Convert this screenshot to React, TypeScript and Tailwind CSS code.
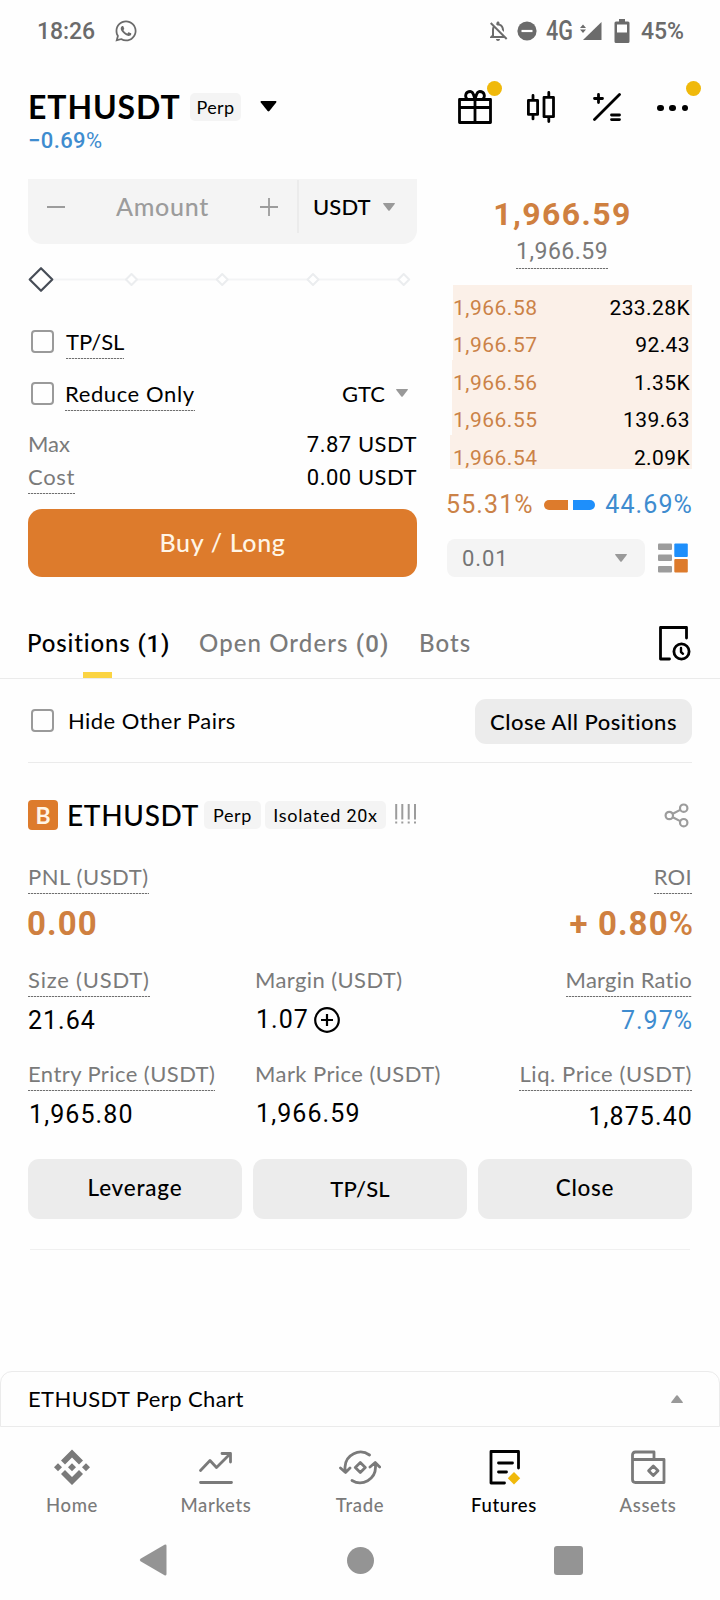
import type { ReactNode } from "react";
import { FaWhatsapp } from "react-icons/fa";
import { MdOutlineNotificationsOff } from "react-icons/md";

const NUM = "font-['Roboto','Liberation_Sans',sans-serif]";

function Num({ children, className = "" }: { children: ReactNode; className?: string }) {
  return <span className={`${NUM} ${className}`}>{children}</span>;
}

/* Label with the dashed rule that marks an explainable term */
function Hint({ children, className = "" }: { children: ReactNode; className?: string }) {
  return (
    <div className={`flex h-[31px] w-fit flex-col whitespace-nowrap ${className}`}>
      <span className="leading-7">{children}</span>
      <span className="mt-0.5 h-px w-full shrink-0 bg-[repeating-linear-gradient(90deg,#6f6f6f_0_2px,#dcdcdc_2px_3px)]" />
    </div>
  );
}

function Checkbox({ className = "" }: { className?: string }) {
  return <span className={`size-[23px] shrink-0 rounded-[4px] border-2 border-[#9a9a9a] ${className}`} />;
}

function Caret({ className = "" }: { className?: string }) {
  return (
    <svg viewBox="0 0 12 8" className={`h-2 w-3 shrink-0 fill-[#999] ${className}`}>
      <path d="M.6 0h10.800q.9.200.3 1L6.700 7.400q-.7.700-1.400 0L.3 1Q-.3.200.6 0z" />
    </svg>
  );
}

function StatusBar() {
  return (
    <div className={`flex h-[62px] items-center pt-[3px] text-[23px] font-medium text-[#6b6b6b] ${NUM}`}>
      <span className="ml-[37px] w-[78px] tracking-[-0.1px]">18:26</span>
      <FaWhatsapp className="-ml-px -mt-1 size-6" />
      <div className="ml-auto mr-[37px] flex items-center">
        <MdOutlineNotificationsOff className="-mt-[3px] mr-[7px] size-6" />
        <svg viewBox="0 0 20 20" className="-mt-1 mr-[9px] size-5">
          <circle cx="10" cy="10" r="9.600" fill="#6b6b6b" />
          <path d="M4.500 10h11" stroke="#fff" strokeWidth="2.200" />
        </svg>
        <span className="-mt-0.5 w-7 origin-left scale-x-[0.8] text-[27px] leading-none">4G</span>
        <svg viewBox="0 0 22 20" className="-mt-[3px] ml-[6px] h-5 w-[22px]" fill="#6b6b6b">
          <path d="M21.500 1v18H3z" />
          <path d="M0 7 3 3.500 6 7zM0 8.500 3 12l3-3.500z" />
        </svg>
        <svg viewBox="0 0 16 24" className="-mt-[3px] ml-3 h-6 w-4">
          <path d="M5 0h6v2.500h3q1.500 0 1.500 1.500v18.500q0 1.500-1.500 1.500H2Q.5 24 .5 22.500V4Q.5 2.500 2 2.500h3z" fill="#6b6b6b" />
          <path d="M3 5.500h10v8H3z" fill="#fff" />
        </svg>
        <span className="ml-[11px] w-[42px] tracking-[-0.1px]">45%</span>
      </div>
    </div>
  );
}

function Dot({ className }: { className: string }) {
  return <span className={`absolute -top-[9px] size-[15px] rounded-full bg-[#f0b90b] ${className}`} />;
}

function Header() {
  return (
    <header className="h-[117px] px-7 pt-[25px]">
      <div className="flex h-10 items-center">
        <h1 className="w-[152px] text-[32px] font-bold leading-10 tracking-[0.9px]">ETHUSDT</h1>
        <span className="ml-[10px] flex h-7 w-[51px] items-center justify-center rounded-[5px] bg-[#f4f4f4] pt-px text-[18px] tracking-[0.4px]">Perp</span>
        <svg viewBox="0 0 17 11" className="-mt-px ml-[19px] h-[11px] w-[17px]">
          <path d="M1.200 0h14.600q1.200.3.400 1.400L9.400 10q-.9.900-1.800 0L.8 1.400Q0 .3 1.200 0z" />
        </svg>
        <div className="ml-auto mr-1 flex items-center">
          <span className="relative mr-[35px]">
            <svg viewBox="0 0 34 34" className="block size-[34px]" fill="none" stroke="#000" strokeWidth="2.800" strokeLinejoin="round">
              <path d="M1.500 9.500h31v23h-31zM1.500 17.500h31M17 9.500v23" />
              <path d="M17 9c-1-1-1-7.500-4.800-7.500C7.500 1.500 6.500 6.500 9 9M17 9c1-1 1-7.500 4.800-7.500C26.500 1.500 27.500 6.500 25 9" />
            </svg>
            <Dot className="-right-[10px]" />
          </span>
          <svg viewBox="0 0 28 32" className="mr-[38px] h-8 w-7" fill="none" stroke="#000" strokeWidth="2.800" strokeLinecap="round" strokeLinejoin="round">
            <path d="M1.400 9.400h9.200v14H1.400zM17 6.400h9.500v19.300H17zM6 4.500v4.900M6 23.400v4.500M21.800 1.500v4.900M21.800 25.700v4.900" />
          </svg>
          <svg viewBox="0 0 28 28" className="mr-[36px] size-7" fill="none" stroke="#000" strokeWidth="2.800" strokeLinecap="round">
            <path d="M1.500 26.500 26.500 1.500M1.500 5.500h8M5.500 1.500v8M18.500 22h8M18.500 26.600h8" />
          </svg>
          <span className="relative flex h-[34px] w-[31px] items-center justify-between">
            <i className="mt-0.5 size-[6.5px] rounded-full bg-black" />
            <i className="mt-0.5 size-[6.5px] rounded-full bg-black" />
            <i className="mt-0.5 size-[6.5px] rounded-full bg-black" />
            <Dot className="-right-[13px]" />
          </span>
        </div>
      </div>
      <Num className="block pt-px text-[22px] font-medium leading-[26px] tracking-[0.4px] text-[#3e8ccf]">−0.69<span className="font-normal">%</span></Num>
    </header>
  );
}

function OrderForm() {
  return (
    <div className="w-[389px]">
      <div className="flex h-[65px] items-start rounded-b-[14px] bg-[#f4f4f4]">
        <div className="flex h-14 flex-1 items-center text-[#9c9c9c]">
          <span className="ml-[19px] h-[2px] w-[18px] bg-[#9c9c9c]" />
          <span className="flex-1 text-center text-[25px] font-medium tracking-[0.75px]">Amount</span>
          <svg viewBox="0 0 18 18" className="mr-[19px] size-[18px]" stroke="#9c9c9c" strokeWidth="1.800">
            <path d="M0 9h18M9 0v18" />
          </svg>
        </div>
        <span className="mt-px h-[53px] w-0.5 bg-[#ebebeb]" />
        <div className="flex h-14 w-[118px] items-center pl-[14px] text-[22px] font-medium tracking-[0.1px]">
          <span className="-mt-0.5">USDT</span>
          <Caret className="ml-auto mr-[22px]" />
        </div>
      </div>
      <svg viewBox="0 0 389 27" className="mt-[22px] block h-[27px] w-[389px]" fill="#fff">
        <path d="M13 13.500h363" stroke="#f3f4f5" strokeWidth="2" />
        {[103.5, 194.2, 285, 375.7].map((x) => (
          <path key={x} d={`M${x - 5.5} 13.500l5.500-5.500 5.500 5.500-5.500 5.500z`} stroke="#ebedef" strokeWidth="2" strokeLinejoin="round" />
        ))}
        <path d="M1.700 13.500 13 2.200l11.300 11.300L13 24.800z" stroke="#474d57" strokeWidth="2.200" strokeLinejoin="round" />
      </svg>
      <div className="mt-[35px] flex h-[31px] items-start pl-[3px] text-[22px]">
        <Checkbox className="mt-0.5" />
        <Hint className="ml-3">TP/SL</Hint>
      </div>
      <div className="mt-[21px] flex h-[31px] items-start pl-[3px] text-[22px]">
        <Checkbox className="mt-0.5" />
        <Hint className="ml-[11px] tracking-[0.6px]">Reduce Only</Hint>
        <span className="ml-auto leading-7">GTC</span>
        <Caret className="ml-[11px] mr-[9px] mt-[9px]" />
      </div>
      <div className="mt-[19px] flex justify-between text-[22px] leading-7">
        <span className="text-[#7a7a7a]">Max</span>
        <span className="tracking-[0.5px]"><Num>7.87</Num> USDT</span>
      </div>
      <div className="mt-1 flex h-[31px] justify-between text-[22px] leading-7">
        <Hint className="tracking-[0.7px] text-[#7a7a7a]">Cost</Hint>
        <span className="tracking-[0.5px]"><Num>0.00</Num> USDT</span>
      </div>
      <button className="mt-[15px] block h-[68px] w-full rounded-[14px] bg-[#dd7b2c] text-[25px] font-medium tracking-[0.65px] text-[#fff5e6]">
        Buy / Long
      </button>
    </div>
  );
}

const asks = [
  { price: "1,966.58", amount: "233.28K", pad: "ml-1.5" },
  { price: "1,966.57", amount: "92.43", pad: "ml-1.5" },
  { price: "1,966.56", amount: "1.35K", pad: "ml-[5px] pl-px" },
  { price: "1,966.55", amount: "139.63", pad: "ml-[5px] pl-px" },
  { price: "1,966.54", amount: "2.09K", pad: "ml-[3px] pl-[3px]" },
];

function OrderBook() {
  return (
    <div className={`flex w-[245px] flex-col ${NUM}`}>
      <span className="mt-[15px] pr-[14px] text-center text-[32px] font-bold leading-10 tracking-[1.4px] text-[#cf8040]">1,966.59</span>
      <Hint className="ml-[69px] mt-[3px] pt-px text-[23px] tracking-[0.5px] text-[#7a7a7a]">1,966.59</Hint>
      <div className="mt-[17px] h-[184px] overflow-hidden">
        {asks.map((r) => (
          <div key={r.price} className={`flex h-[37.5px] justify-between bg-[#fbf0e8] pr-0.5 pt-[7.5px] text-[21px] leading-[30px] ${r.pad}`}>
            <span className="tracking-[0.5px] text-[#cb8247]">{r.price}</span>
            <span className="tracking-[0.4px]">{r.amount}</span>
          </div>
        ))}
      </div>
      <div className="mt-[15px] flex h-10 items-center pt-px text-[25px] tracking-[1.1px]">
        <span className="-ml-px w-[98px] text-[#cb8247]">55.31%</span>
        <span className="h-[10px] w-6 rounded-l-full bg-[#dd7b2c]" />
        <span className="ml-[5px] h-[10px] w-[22px] rounded-r-full bg-[#1e8ffb]" />
        <span className="-mr-px ml-auto text-[#3e8ccf]">44.69%</span>
      </div>
      <div className="mt-[15px] flex h-[38px] items-center">
        <div className="flex h-full w-[198px] items-center justify-between rounded-[8px] bg-[#f4f4f4] pl-[15px] pr-[18px] text-[22px] tracking-[0.9px] text-[#757575]">
          0.01
          <Caret />
        </div>
        <svg viewBox="0 0 30 30" className="ml-[13px] size-[30px]">
          <g fill="#9c9c9c">
            <rect x="0" y=".5" width="14" height="6.500" rx="1" />
            <rect x="0" y="11.500" width="14" height="6.500" rx="1" />
            <rect x="0" y="23" width="14" height="6.500" rx="1" />
          </g>
          <rect x="16.300" y=".5" width="13.500" height="13.500" rx="1" fill="#1e8ffb" />
          <rect x="16.300" y="16" width="13.500" height="13.500" rx="1" fill="#dd7b2c" />
        </svg>
      </div>
    </div>
  );
}

function Tabs() {
  return (
    <div className="mt-8 flex h-[70px] items-stretch border-b border-[#ebebeb] px-7 text-[24px] font-medium leading-[67px] text-[#7a7a7a]">
      <span className="relative -ml-px w-[172px] whitespace-nowrap tracking-[0.85px] text-black">
        Positions <Num>(1)</Num>
        <i className="absolute bottom-0 left-[56px] h-[6px] w-[29px] bg-[#fbd443]" />
      </span>
      <span className="w-[220px] whitespace-nowrap tracking-[1.1px]">Open Orders <Num>(0)</Num></span>
      <span className="tracking-[1.1px]">Bots</span>
      <svg viewBox="0 0 32 36" className="ml-auto mr-px mt-4 h-9 w-8" fill="none" stroke="#000" strokeWidth="2.800" strokeLinecap="round" strokeLinejoin="round">
        <path d="M10.500 34H1.500V2.500h26v10.500" />
        <circle cx="22.500" cy="26.500" r="7.600" />
        <path d="M22 23v4l2 1.800" strokeWidth="2.400" />
      </svg>
    </div>
  );
}

function Badge({ children, className = "" }: { children: ReactNode; className?: string }) {
  return (
    <span className={`flex h-7 items-center justify-center whitespace-nowrap rounded-[5px] bg-[#f4f4f4] text-[18px] ${className}`}>{children}</span>
  );
}

function Action({ children, className }: { children: ReactNode; className: string }) {
  return <button className={`h-[60px] flex-1 rounded-[11px] bg-[#ececec] pb-0.5 font-medium ${className}`}>{children}</button>;
}

function Position() {
  return (
    <section className="px-7">
      <div className="mt-[37px] flex h-[30px] items-center">
        <span className="flex size-[30px] items-center justify-center rounded-[4px] bg-[#dd7b2c] text-[23px] font-bold leading-none text-[#fff5e6]">B</span>
        <h2 className="ml-[9px] w-[137px] text-[28px] font-medium leading-[30px] tracking-[0.7px]">ETHUSDT</h2>
        <Badge className="w-[57px] tracking-[0.6px]">Perp</Badge>
        <Badge className="ml-1 w-[121px] tracking-[0.75px]"><span>Isolated <Num>20</Num>x</span></Badge>
        <svg viewBox="0 0 22 20" className="-mt-0.5 ml-[9px] h-5 w-[22px]" stroke="#9c9c9c" strokeWidth="2">
          <path d="M1.200 0v15.500M7.300 0v15.500M13.700 0v15.500M20 0v15.500M1.200 17.500v2M7.300 17.500v2M13.700 17.500v2M20 17.500v2" />
        </svg>
        <svg viewBox="0 0 25 25" className="ml-auto mr-[3px] size-[25px]" fill="none" stroke="#9c9c9c" strokeWidth="2.200">
          <circle cx="5.300" cy="12.500" r="3.700" />
          <circle cx="19.700" cy="5.200" r="3.700" />
          <circle cx="19.700" cy="19.700" r="3.700" />
          <path d="M8.800 10.800l7.400-3.900M8.800 14.200l7.400 3.900" />
        </svg>
      </div>
      <div className="mt-[33px] flex justify-between text-[22px] text-[#7a7a7a]">
        <Hint className="tracking-[0.55px]">PNL (USDT)</Hint>
        <Hint className="tracking-[0.3px]">ROI</Hint>
      </div>
      <div className={`mt-3 flex h-9 justify-between text-[33px] font-bold leading-[35px] tracking-[1.1px] text-[#cf8040] ${NUM}`}>
        <span className="-ml-px">0.00</span>
        <span className="-mr-px">+ 0.80<span className="font-medium tracking-normal">%</span></span>
      </div>
      <div className="mt-6 grid grid-cols-[227px_1fr_auto] text-[22px] text-[#7a7a7a]">
        <Hint className="tracking-[0.8px]">Size (USDT)</Hint>
        <span className="leading-7 tracking-[0.4px]">Margin (USDT)</span>
        <Hint className="tracking-[0.25px]">Margin Ratio</Hint>
      </div>
      <div className={`mt-[10px] grid h-7 grid-cols-[228px_1fr_auto] text-[25px] leading-7 tracking-[1px] ${NUM}`}>
        <span>21.64</span>
        <span className="-mt-px flex h-7 items-center">
          1.07
          <svg viewBox="0 0 26 26" className="ml-[5px] size-[26px]" fill="none" stroke="#000" strokeWidth="2.200">
            <circle cx="13" cy="13" r="11.800" />
            <path d="M7 13h12M13 7v12" />
          </svg>
        </span>
        <span className="-mr-px text-[#3e8ccf]">7.97%</span>
      </div>
      <div className="mt-[25px] grid grid-cols-[227px_1fr_auto] text-[22px] text-[#7a7a7a]">
        <Hint className="tracking-[0.43px]">Entry Price (USDT)</Hint>
        <span className="leading-7 tracking-[0.43px]">Mark Price (USDT)</span>
        <Hint className="tracking-[0.6px]">Liq. Price (USDT)</Hint>
      </div>
      <div className={`mt-[10px] grid h-7 grid-cols-[227px_1fr_auto] text-[25px] leading-7 tracking-[1.1px] ${NUM}`}>
        <span className="pl-px">1,965.80</span>
        <span className="-mt-px pl-px">1,966.59</span>
        <span className="-mr-px mt-0.5">1,875.40</span>
      </div>
      <div className="mt-[30px] flex gap-[11px]">
        <Action className="text-[22.5px] tracking-[0.8px]">Leverage</Action>
        <Action className="text-[22px] tracking-[0.2px]">TP/SL</Action>
        <Action className="text-[22.5px] tracking-[0.7px]">Close</Action>
      </div>
      <div className="mx-0.5 mt-[30px] h-px bg-[#f0f0f0]" />
    </section>
  );
}

function NavItem({ label, active, children }: { label: string; active?: boolean; children: ReactNode }) {
  return (
    <div className={`flex w-36 flex-col items-center ${active ? "text-black" : "text-[#7a7a7a]"}`}>
      <svg viewBox="0 0 42 36" className="h-9 w-[42px]" fill="none" stroke="currentColor" strokeWidth="2.800" strokeLinecap="round" strokeLinejoin="round">
        {children}
      </svg>
      <span className="mt-[10px] text-[18.5px] font-medium leading-5 tracking-[0.65px]">{label}</span>
    </div>
  );
}

function BottomNav() {
  return (
    <nav className="flex h-[93px] pt-[22px]">
      <NavItem label="Home">
        <g fill="currentColor" stroke="none">
          <path d="M21 .5 32 11.500l-4 4-7-7-7 7-4-4zM21 36 32 25l-4-4-7 7-7-7-4 4zM21 14.300l4 4-4 4-4-4zM7 14.300l4 4-4 4-4-4zM35 14.300l4 4-4 4-4-4z" />
        </g>
      </NavItem>
      <NavItem label="Markets">
        <path d="M5.500 21.500 15 11.500l6.500 7L35 5M27 4.500h8.500v8.500M5.500 33.500h31" />
      </NavItem>
      <NavItem label="Trade">
        <path d="M6 23V18A15.500 15.500 0 0 1 30.500 6M1.500 19l5 4.500 4.500-4.500M36.500 15V18A15.500 15.500 0 0 1 13 31.500M31 18l5.200-4.500 4.500 4.500M21.300 13.500l5 5-5 5-5-5z" />
      </NavItem>
      <NavItem label="Futures" active>
        <path d="M21.500 34H8V2.500h27.500V19M15.500 14h14M15.500 23h8" />
        <path d="M31 23l6.200 6.200L31 35.400l-6.200-6.200z" fill="#f0b90b" stroke="none" />
      </NavItem>
      <NavItem label="Assets">
        <path d="M5.500 11V6q0-3 3-3H27v7.500M5.500 10.500H37V33.500H8.500q-3 0-3-3zM5.500 10.500v20M26.300 17l4.700 4.800-4.700 4.800-4.700-4.800z" />
      </NavItem>
    </nav>
  );
}

export default function App() {
  return (
    <div className="h-[1600px] w-[720px] overflow-hidden bg-[#fefefe] font-['Lato','Liberation_Sans',sans-serif] text-black">
      <StatusBar />
      <Header />
      <main>
        <div className="flex h-[398px] justify-between px-7">
          <OrderForm />
          <OrderBook />
        </div>
        <Tabs />
        <div className="mx-7 flex h-[84px] items-center border-b border-[#ebebeb] pl-[3px] text-[22px]">
          <Checkbox />
          <span className="ml-[14px] tracking-[0.45px]">Hide Other Pairs</span>
          <button className="ml-auto mt-px h-[45px] w-[217px] rounded-[11px] bg-[#ececec] font-medium tracking-[0.5px]">Close All Positions</button>
        </div>
        <Position />
      </main>
      <div className="mt-[121px] flex h-[56px] items-center justify-between rounded-t-[12px] border border-[#ebebeb] pl-[27px] pr-9 text-[22px] tracking-[0.4px]">
        <span className="-mt-px">ETHUSDT Perp Chart</span>
        <Caret className="rotate-180" />
      </div>
      <BottomNav />
      <div className="flex h-20 items-center justify-center gap-[180px] pl-px">
        <svg viewBox="0 0 28 32" className="h-8 w-7" fill="#949494">
          <path d="M25.500.8Q27.500 0 27.500 2v28q0 2-2 1.200L1.500 17.200q-1.500-1.200 0-2.400z" />
        </svg>
        <span className="size-[27px] rounded-full bg-[#949494]" />
        <span className="size-[29px] rounded-[3px] bg-[#949494]" />
      </div>
    </div>
  );
}
